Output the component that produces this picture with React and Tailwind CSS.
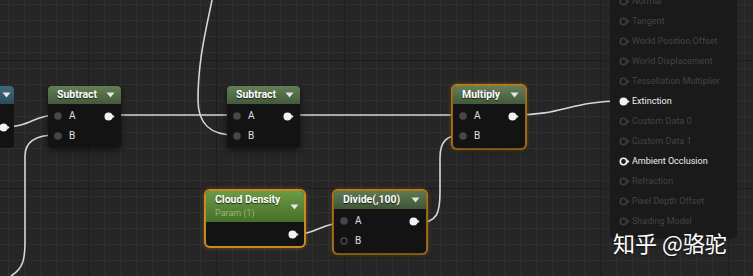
import React from 'react';

const FONT = { fontFamily: 'Roboto, "Liberation Sans", sans-serif' };

// Output pin: filled circle with a small arrow tip
const OutPin = ({ hollow = false, color = '#f2f2f2' }) => (
  <svg width="11" height="9" viewBox="0 0 11 9" className="shrink-0">
    {hollow ? (
      <circle cx="4.5" cy="4.5" r="3.2" fill="none" stroke={color} strokeWidth="1.6" />
    ) : (
      <circle cx="4.5" cy="4.5" r="4" fill={color} />
    )}
    <path d="M8.2 2.6 L10.6 4.5 L8.2 6.4 Z" fill={color} />
  </svg>
);

const InPin = ({ hollow = false }) => (
  <svg width="8" height="8" viewBox="0 0 8 8" className="shrink-0">
    {hollow ? (
      <circle cx="4" cy="4" r="3" fill="#111" stroke="#4a4a4a" strokeWidth="1.4" />
    ) : (
      <circle cx="4" cy="4" r="3.8" fill="#474747" />
    )}
  </svg>
);

const Arrow = () => (
  <svg width="9" height="6" viewBox="0 0 9 6" className="shrink-0">
    <path d="M0.5 0.5 L8.5 0.5 L4.5 5.5 Z" fill="#e6e6e6" />
  </svg>
);

const Node = ({ title, header, inputs, hollowB }) => (
  <div className="flex flex-col rounded-[4px] bg-[#131313] shadow-[0_2px_6px_rgba(0,0,0,0.6)] overflow-hidden" style={FONT}>
    <div className={`h-[18px] flex items-center justify-between pl-[9px] pr-[6px] ${header}`}>
      <span className="text-[10.5px] font-bold text-white leading-none [text-shadow:0_1px_1px_rgba(0,0,0,0.7)]">{title}</span>
      <Arrow />
    </div>
    <div className="flex justify-between pl-[6px] pr-[6px] pt-[2px] pb-[2px]">
      <div className="flex flex-col">
        {inputs.map((p, i) => (
          <div key={p} className="h-[20px] flex items-center gap-[7px]">
            <InPin hollow={hollowB && i === 1} />
            <span className="text-[10px] text-[#e0e0e0] leading-none">{p}</span>
          </div>
        ))}
      </div>
      <div className="h-[20px] flex items-center">
        <OutPin />
      </div>
    </div>
  </div>
);

const Selected = ({ children }) => (
  <div className="rounded-[6px] p-[2px] bg-[#c98a24] shadow-[0_0_4px_rgba(200,130,30,0.5)]">{children}</div>
);

const outputs = [
  ['Normal', 'dim'],
  ['Tangent', 'dim'],
  ['World Position Offset', 'dim'],
  ['World Displacement', 'dim'],
  ['Tessellation Multiplier', 'dim'],
  ['Extinction', 'on'],
  ['Custom Data 0', 'dim'],
  ['Custom Data 1', 'dim'],
  ['Ambient Occlusion', 'open'],
  ['Refraction', 'dim'],
  ['Pixel Depth Offset', 'dim'],
  ['Shading Model', 'dim'],
];

export default function App() {
  return (
    <div
      className="relative w-[753px] h-[276px] overflow-hidden bg-[#262626] bg-[linear-gradient(#1d1d1d_1px,transparent_1px),linear-gradient(90deg,#1d1d1d_1px,transparent_1px),linear-gradient(#2f2f2f_1px,transparent_1px),linear-gradient(90deg,#2f2f2f_1px,transparent_1px)] bg-[size:128px_128px,128px_128px,16px_16px,16px_16px] bg-[position:-40px_60px,-40px_60px,-8px_4px,-8px_4px]"
      style={FONT}
    >
      {/* wires */}
      <svg className="absolute inset-0" width="753" height="276" fill="none" stroke="#d6d6d6" strokeWidth="1.6">
        <path d="M5 127 C 30 127, 34 115, 56 115" />
        <path d="M11 276 C 24 268, 25 258, 25 240 L 25 156 C 25 141, 36 135, 56 135" />
        <path d="M212 0 C 206 30, 198 60, 198 100 C 198 124, 210 135, 235 135" />
        <path d="M110 115 L 235 115" />
        <path d="M291 115 L 462 115" />
        <path d="M516 115 C 562 115, 572 101, 622 101" />
        <path d="M298 234 C 316 234, 322 223, 342 223" />
        <path d="M417 223 C 438 223, 440 212, 440 192 L 440 158 C 440 141, 447 135, 462 135" />
      </svg>

      {/* partially visible node at the left edge */}
      <div className="absolute left-[-60px] top-[86px] w-[74px] h-[62px] rounded-[4px] bg-[#131313] overflow-hidden">
        <div className="h-[18px] bg-[linear-gradient(#3f6a80,#2b4a5a)] flex items-center justify-end pr-[3px]">
          <Arrow />
        </div>
        <div className="absolute left-[59px] top-[37px]">
          <OutPin />
        </div>
      </div>

      <div className="absolute left-[48px] top-[86px] w-[73px]">
        <Node title="Subtract" header="bg-[linear-gradient(#647f57,#425a3a)]" inputs={['A', 'B']} />
      </div>

      <div className="absolute left-[227px] top-[86px] w-[73px]">
        <Node title="Subtract" header="bg-[linear-gradient(#647f57,#425a3a)]" inputs={['A', 'B']} />
      </div>

      <div className="absolute left-[451px] top-[84px] w-[76px]">
        <Selected>
          <Node title="Multiply" header="bg-[linear-gradient(#647f57,#425a3a)]" inputs={['A', 'B']} />
        </Selected>
      </div>

      {/* Cloud Density param */}
      <div className="absolute left-[204px] top-[189px] w-[102px]">
        <Selected>
          <div className="flex flex-col rounded-[4px] bg-[#131313] overflow-hidden">
            <div className="h-[31px] flex items-center justify-between pl-[9px] pr-[5px] bg-[linear-gradient(#6d9a45,#45702a)]">
              <div className="flex flex-col gap-[3px]">
                <span className="text-[10.5px] font-bold text-white leading-none [text-shadow:0_1px_1px_rgba(0,0,0,0.7)]">Cloud Density</span>
                <span className="text-[9px] text-[#93b877] leading-none">Param (1)</span>
              </div>
              <Arrow />
            </div>
            <div className="h-[24px] flex items-center justify-end pr-[5px]">
              <OutPin />
            </div>
          </div>
        </Selected>
      </div>

      <div className="absolute left-[332px] top-[189px] w-[96px]">
        <Selected>
          <Node title="Divide(,100)" header="bg-[linear-gradient(#5f7a52,#3f5637)]" inputs={['A', 'B']} hollowB />
        </Selected>
      </div>

      {/* material result panel */}
      <div className="absolute left-[610px] top-[-9px] w-[127px] rounded-b-[5px] bg-[#1a1a1a] pt-[0px] pb-[8px] pl-[9px] flex flex-col">
        {outputs.map(([name, st]) => (
          <div key={name} className="h-[20px] flex items-center gap-[2px]">
            <OutPin hollow={st !== 'on'} color={st === 'dim' ? '#3c3c3c' : '#f2f2f2'} />
            <span className={`text-[9px] leading-none whitespace-nowrap ${st === 'dim' ? 'text-[#444444]' : 'text-[#f0f0f0]'}`}>{name}</span>
          </div>
        ))}
      </div>

      {/* watermark */}
      <div
        className="absolute left-[613px] top-[231px] text-[22px] text-white leading-none [text-shadow:0_1px_2px_rgba(0,0,0,0.6)]"
        style={{ fontFamily: '"Noto Sans CJK SC", "Liberation Sans", sans-serif' }}
      >
        知乎 @骆驼
      </div>
    </div>
  );
}
